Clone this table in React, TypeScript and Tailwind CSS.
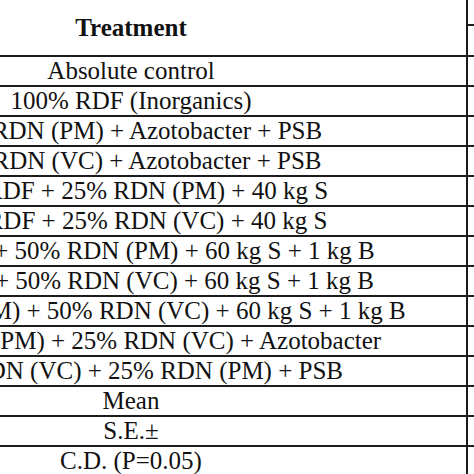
import React from 'react';

const rows = [
  'Absolute control',
  '100% RDF (Inorganics)',
  '50% RDN (PM) + Azotobacter + PSB',
  '50% RDN (VC) + Azotobacter + PSB',
  '75% RDF + 25% RDN (PM) + 40 kg S',
  '75% RDF + 25% RDN (VC) + 40 kg S',
  '50% RDF + 50% RDN (PM) + 60 kg S + 1 kg B',
  '50% RDF + 50% RDN (VC) + 60 kg S + 1 kg B',
  '25% RDN (PM) + 50% RDN (VC) + 60 kg S + 1 kg B',
  '50% RDN (PM) + 25% RDN (VC) + Azotobacter',
  '50% RDN (VC) + 25% RDN (PM) + PSB',
  'Mean',
  'S.E.±',
  'C.D. (P=0.05)',
];

export default function App() {
  return (
    <div
      className="w-[474px] h-[474px] overflow-hidden bg-white text-[#111]"
      style={{ fontFamily: '"Liberation Serif", "Times New Roman", serif' }}
    >
      <div className="flex ml-[-204px]">
        {/* Treatment column */}
        <div className="w-[672px] shrink-0 border-r-2 border-[#1c1c1c]">
          <div className="h-[57px] border-b-2 border-[#1c1c1c] flex items-center justify-center text-[25px] font-bold pt-[1px]">
            Treatment
          </div>
          {rows.map((r, i) => (
            <div
              key={i}
              className="h-[30px] border-b-2 border-[#1c1c1c] flex items-center justify-center text-[25px] leading-[28px] whitespace-nowrap"
            >
              {r}
            </div>
          ))}
        </div>
        {/* next column, mostly cut off */}
        <div className="w-[40px] shrink-0">
          <div className="h-[26px] border-b-2 border-[#1c1c1c]" />
          <div className="h-[31px] border-b-2 border-[#1c1c1c]" />
          {rows.map((_, i) => (
            <div key={i} className="h-[30px] border-b-2 border-[#1c1c1c]" />
          ))}
        </div>
      </div>
    </div>
  );
}
